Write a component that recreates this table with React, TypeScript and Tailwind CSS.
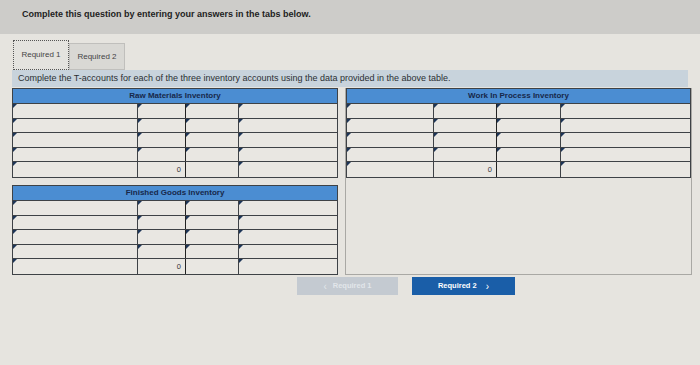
import React from 'react';

type Cell = { input?: boolean; value?: string };

const Marker: React.FC = () => (
  <span className="absolute left-0 top-0 h-0 w-0 border-t-[4px] border-r-[4px] border-t-[#1d3557] border-r-transparent" />
);

const inputRow: Cell[] = [{ input: true }, { input: true }, { input: true }, { input: true }];
const totalRow: Cell[] = [{ input: true }, { value: '0' }, {}, { input: true }];
const rows: Cell[][] = [inputRow, inputRow, inputRow, inputRow, totalRow];

const TAccount: React.FC<{ title: string; cols: string }> = ({ title, cols }) => (
  <div className="border border-[#3e4246] bg-[#e9e7e2]">
    <div className="flex h-[15px] items-center justify-center border-b border-[#3e4246] bg-[#4b8dd2] text-[8px] font-bold text-[#17284a]">
      {title}
    </div>
    {rows.map((row, i) => (
      <div key={i} className={`grid h-[14.6px] ${cols} ${i < rows.length - 1 ? 'border-b border-[#3e4246]' : ''}`}>
        {row.map((cell, j) => (
          <div
            key={j}
            className={`relative flex items-center justify-end pr-[4px] text-[7.5px] text-[#333] ${j < 3 ? 'border-r border-[#3e4246]' : ''} ${j === 1 ? 'border-r-[1.5px] border-r-[#222]' : ''}`}
          >
            {cell.input && <Marker />}
            {cell.value}
          </div>
        ))}
      </div>
    ))}
  </div>
);

const App: React.FC = () => {
  return (
    <div className="h-[365px] w-[700px] overflow-hidden bg-[#e6e4df] font-['Liberation_Sans',Arial,sans-serif]">
      {/* Question header */}
      <div className="flex h-[34px] items-center bg-[#cdccc9] pl-[22px] pb-[4px]">
        <p className="text-[9px] font-bold text-[#222]">Complete this question by entering your answers in the tabs below.</p>
      </div>

      {/* Tabs */}
      <div className="mt-[6px] flex items-end px-[13px]">
        <div className="flex h-[30px] w-[56px] items-center justify-center border border-dotted border-[#555] bg-[#e4e3df] text-[8px] text-[#444]">
          Required 1
        </div>
        <div className="flex h-[27px] w-[56px] items-center justify-center border border-[#c0bfbc] bg-[#d9d8d4] text-[8px] text-[#444]">
          Required 2
        </div>
      </div>

      {/* Instruction */}
      <div className="mx-[12px] flex h-[17px] items-center bg-[#c8d3dc] pl-[6px]">
        <p className="text-[9px] text-[#2b2f33]">
          Complete the T-accounts for each of the three inventory accounts using the data provided in the above table.
        </p>
      </div>

      {/* T-accounts */}
      <div className="ml-[12px] mt-[1px] grid w-[680px] grid-cols-[326px_1fr] gap-[7px]">
        <div className="flex h-[187px] flex-col gap-[7px] border-b border-[#a9a8a4]">
          <TAccount title="Raw Materials Inventory" cols="grid-cols-[125px_48px_53px_1fr]" />
          <TAccount title="Finished Goods Inventory" cols="grid-cols-[125px_48px_53px_1fr]" />
        </div>
        <div className="flex h-[187px] flex-col border-x border-b border-[#a9a8a4]">
          <TAccount title="Work In Process Inventory" cols="grid-cols-[87px_63px_64px_1fr]" />
        </div>
      </div>

      {/* Navigation */}
      <div className="mt-[2px] flex justify-center gap-[14px] pl-[112px]">
        <button className="flex h-[18px] w-[101px] items-center justify-center gap-[6px] bg-[#c4cad1] text-[7.5px] font-bold text-[#e2e6ea]">
          <span className="text-[10px] font-normal">&lsaquo;</span>
          Required 1
        </button>
        <button className="flex h-[18px] w-[103px] items-center justify-center gap-[9px] bg-[#1a5ea8] text-[7.5px] font-bold text-white">
          Required 2
          <span className="text-[10px] font-normal">&rsaquo;</span>
        </button>
      </div>
    </div>
  );
};

export default App;
